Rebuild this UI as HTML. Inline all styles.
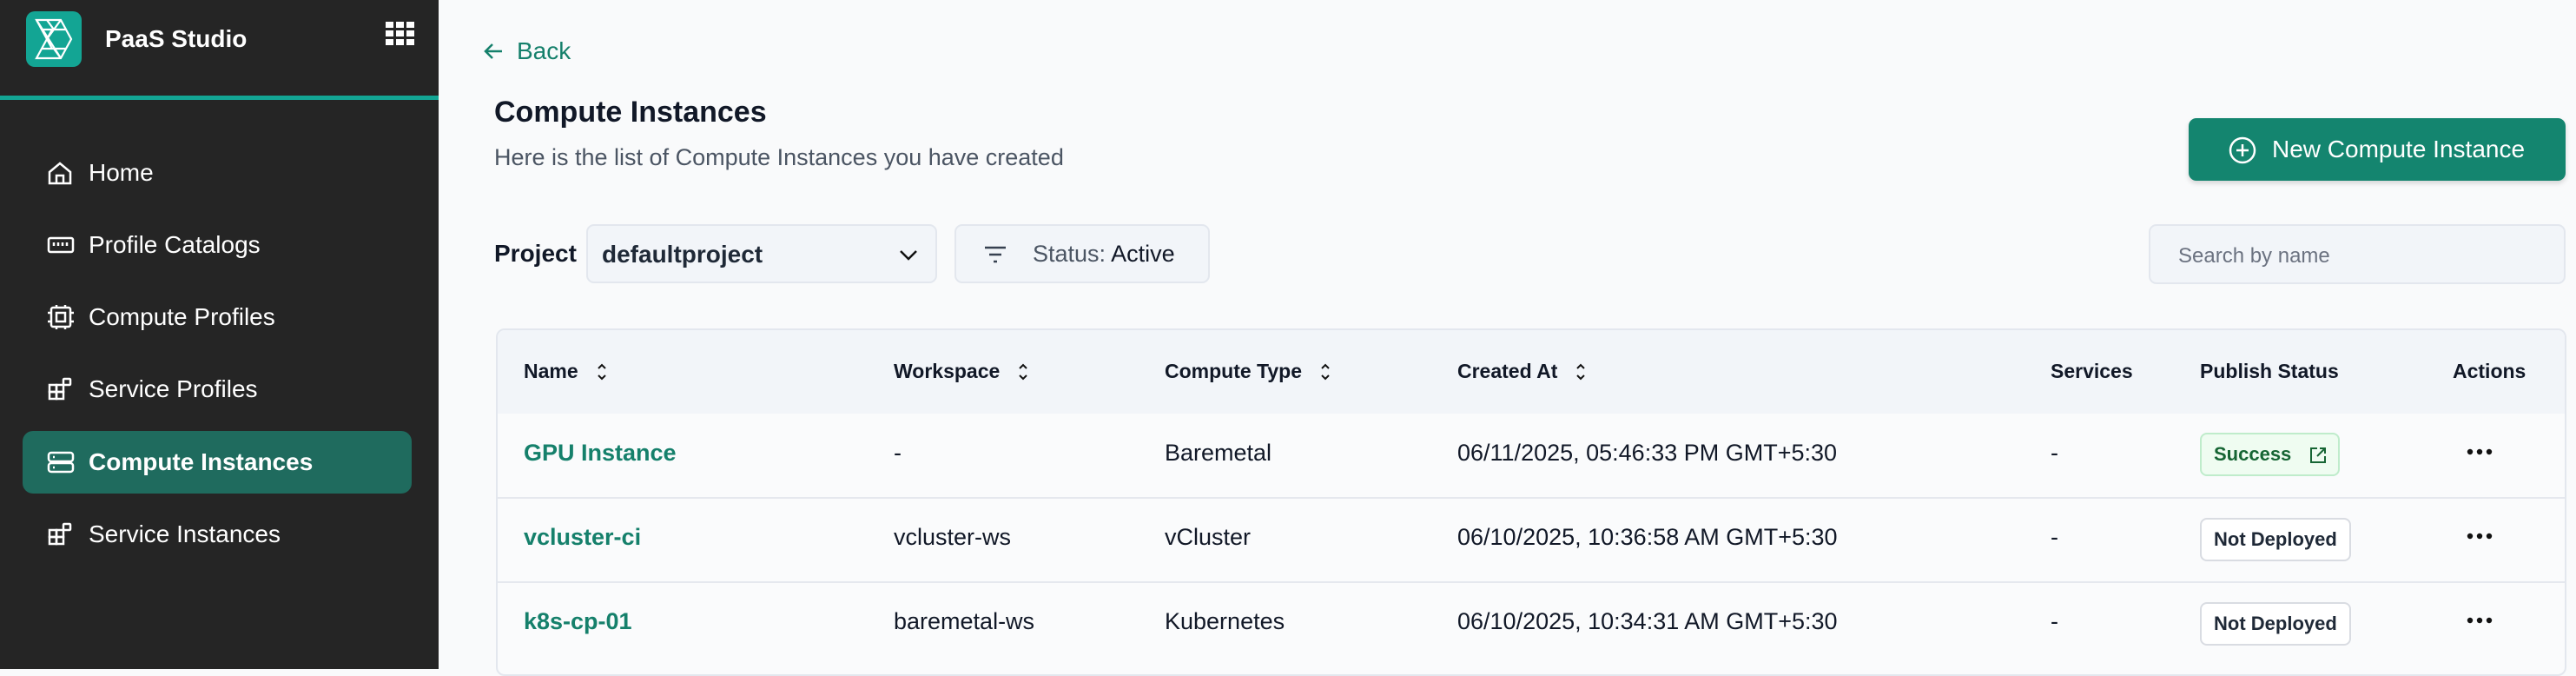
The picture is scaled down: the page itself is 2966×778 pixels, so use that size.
<!DOCTYPE html>
<html><head><meta charset="utf-8"><style>
*{box-sizing:border-box;margin:0;padding:0}
body{width:2966px;height:770px;overflow:hidden;background:#f9fafb;font-family:"Liberation Sans",sans-serif;position:relative;color:#111827}
.sb{position:absolute;left:0;top:0;width:505px;height:770px;background:#252525}
.hdr{position:absolute;left:0;top:0;width:505px;height:115px;border-bottom:5px solid #13a594}
.logo{position:absolute;left:30px;top:13px;width:64px;height:64px;background:#13a594;border-radius:10px}
.brand{position:absolute;left:121px;top:29px;color:#fff;font-weight:bold;font-size:28px}
.nav{position:absolute;left:0;width:505px;height:72px;color:#fff;font-size:28px}
.nav span{position:absolute;left:102px;top:50%;transform:translateY(-50%)}
.nav svg{position:absolute;left:54px;top:50%;transform:translateY(-50%)}
.act{left:26px;width:448px;background:#1f6b5e;border-radius:12px;font-weight:bold}
.act span{left:76px}.act svg{left:28px}
.abs{position:absolute}
.box{position:absolute;background:#f2f5f9;border:2px solid #e3e7ee;border-radius:9px}
.th{position:absolute;top:414px;font-size:23px;font-weight:bold;color:#111827}
.th svg{vertical-align:-4px;margin-left:20px}
.td{position:absolute;font-size:27px;color:#111827}
.lnk{color:#15806b;font-weight:bold}
.badge{position:absolute;border-radius:8px;font-size:22px;font-weight:bold;padding:0 14px;height:50px;line-height:46px}
.dots{position:absolute;left:2840px}
</style></head><body>
<div class="sb">
 <div class="hdr">
  <div class="logo"><svg width="64" height="64" viewBox="0 0 64 64" fill="none" stroke="#fff" stroke-width="2.2"><path d="M12 10h28l12 22-12 22H12l12-22z"/><path d="M12 10l28 44M40 10L24 32M18 21h28M18 43h28M24 10l8 11M32 43l8 11M30 21l-6 11 6 11"/></svg></div>
  <div class="brand">PaaS Studio</div>
  <svg class="abs" style="left:444px;top:25px" width="34" height="28"><g fill="#fff"><rect x="0" y="0" width="9" height="7"/><rect x="12" y="0" width="9" height="7"/><rect x="24" y="0" width="9" height="7"/><rect x="0" y="10" width="9" height="7"/><rect x="12" y="10" width="9" height="7"/><rect x="24" y="10" width="9" height="7"/><rect x="0" y="20" width="9" height="7"/><rect x="12" y="20" width="9" height="7"/><rect x="24" y="20" width="9" height="7"/></g></svg>
 </div>
 <div class="nav" style="top:163px"><svg width="30" height="28" fill="none" stroke="#fff" stroke-width="2.5"><path d="M3 13L15 3l12 10v13H3z"/><path d="M11 26v-9h8v9"/></svg><span>Home</span></div>
 <div class="nav" style="top:246px"><svg width="32" height="22" fill="none" stroke="#fff" stroke-width="2.5"><rect x="2" y="3" width="28" height="16" rx="2"/><path d="M8 8v4M13 8v4M18 8v4M23 8v4"/></svg><span>Profile Catalogs</span></div>
 <div class="nav" style="top:329px"><svg width="32" height="30" fill="none" stroke="#fff" stroke-width="2.5"><rect x="5" y="4" width="22" height="22" rx="2"/><rect x="11" y="10" width="10" height="10"/><path d="M1 10h4M1 20h4M27 10h4M27 20h4M11 1v3M21 1v3M11 26v3M21 26v3"/></svg><span>Compute Profiles</span></div>
 <div class="nav" style="top:412px"><svg width="30" height="30" fill="none" stroke="#fff" stroke-width="2.5"><rect x="3" y="10" width="8" height="8"/><rect x="11" y="10" width="8" height="8"/><rect x="3" y="18" width="8" height="8"/><rect x="11" y="18" width="8" height="8"/><rect x="19" y="3" width="8" height="7" rx="1"/></svg><span>Service Profiles</span></div>
 <div class="nav act" style="top:496px"><svg width="32" height="26" fill="none" stroke="#fff" stroke-width="2.5"><rect x="2" y="2" width="28" height="10" rx="3"/><rect x="2" y="14" width="28" height="10" rx="3"/><path d="M7 7h2M7 19h2"/></svg><span>Compute Instances</span></div>
 <div class="nav" style="top:579px"><svg width="30" height="30" fill="none" stroke="#fff" stroke-width="2.5"><rect x="3" y="10" width="8" height="8"/><rect x="11" y="10" width="8" height="8"/><rect x="3" y="18" width="8" height="8"/><rect x="11" y="18" width="8" height="8"/><rect x="19" y="3" width="8" height="7" rx="1"/></svg><span>Service Instances</span></div>
</div>

<svg class="abs" style="left:556px;top:48px" width="24" height="22" fill="none" stroke="#15806b" stroke-width="2.5"><path d="M22 11H3M11 3l-8 8 8 8"/></svg>
<div class="abs" style="left:595px;top:43px;font-size:28px;color:#15806b">Back</div>
<div class="abs" style="left:569px;top:110px;font-size:34px;font-weight:bold;color:#111827">Compute Instances</div>
<div class="abs" style="left:569px;top:166px;font-size:27px;color:#4b5563">Here is the list of Compute Instances you have created</div>

<div class="abs" style="left:2520px;top:136px;width:434px;height:72px;background:#14856f;border-radius:9px;box-shadow:0 3px 6px rgba(0,0,0,.15);color:#fff;font-size:28px;line-height:72px"><svg class="abs" style="left:46px;top:21px" width="32" height="32" fill="none" stroke="#fff" stroke-width="2.5"><circle cx="16" cy="16" r="14"/><path d="M16 9v14M9 16h14"/></svg><span class="abs" style="left:96px">New Compute Instance</span></div>

<div class="abs" style="left:569px;top:276px;font-size:28px;font-weight:bold">Project</div>
<div class="box" style="left:675px;top:258px;width:404px;height:68px"><span class="abs" style="left:16px;top:17px;font-size:28px;font-weight:bold;color:#1f2937">defaultproject</span><svg class="abs" style="left:358px;top:27px" width="22" height="14" fill="none" stroke="#111" stroke-width="2.5"><path d="M2 2l9 9 9-9"/></svg></div>
<div class="box" style="left:1099px;top:258px;width:294px;height:68px"><svg class="abs" style="left:32px;top:22px" width="26" height="22" fill="none" stroke="#374151" stroke-width="2.5"><path d="M1 3h24M6 11h14M11 19h4"/></svg><span class="abs" style="left:88px;top:17px;font-size:27px;color:#4b5563">Status: <span style="color:#111827">Active</span></span></div>
<div class="box" style="left:2474px;top:258px;width:480px;height:69px"><span class="abs" style="left:32px;top:21px;font-size:24px;color:#6b7280">Search by name</span></div>

<div class="abs" style="left:571px;top:378px;width:2384px;height:400px;border:2px solid #e3e7ee;border-radius:10px;background:#fafbfc;overflow:hidden">
 <div class="abs" style="left:0;top:0;width:100%;height:96px;background:#f2f5f9"></div>
 <div class="abs" style="left:0;top:192px;width:100%;height:2px;background:#e5e8ee"></div>
 <div class="abs" style="left:0;top:289px;width:100%;height:2px;background:#e5e8ee"></div>
</div>
<div class="th" style="left:603px">Name<svg width="14" height="22" fill="none" stroke="#111" stroke-width="2"><path d="M3 7l4-4 4 4M3 15l4 4 4-4"/></svg></div>
<div class="th" style="left:1029px">Workspace<svg width="14" height="22" fill="none" stroke="#111" stroke-width="2"><path d="M3 7l4-4 4 4M3 15l4 4 4-4"/></svg></div>
<div class="th" style="left:1341px">Compute Type<svg width="14" height="22" fill="none" stroke="#111" stroke-width="2"><path d="M3 7l4-4 4 4M3 15l4 4 4-4"/></svg></div>
<div class="th" style="left:1678px">Created At<svg width="14" height="22" fill="none" stroke="#111" stroke-width="2"><path d="M3 7l4-4 4 4M3 15l4 4 4-4"/></svg></div>
<div class="th" style="left:2361px">Services</div>
<div class="th" style="left:2533px">Publish Status</div>
<div class="th" style="left:2824px">Actions</div>

<div class="td lnk" style="left:603px;top:506px">GPU Instance</div>
<div class="td" style="left:1029px;top:506px">-</div>
<div class="td" style="left:1341px;top:506px">Baremetal</div>
<div class="td" style="left:1678px;top:506px">06/11/2025, 05:46:33 PM GMT+5:30</div>
<div class="td" style="left:2361px;top:506px">-</div>
<div class="badge" style="left:2533px;top:498px;width:161px;background:#effcf1;border:2px solid #bfeccb;color:#166534">Success<svg class="abs" style="left:124px;top:14px" width="20" height="20" fill="none" stroke="#166534" stroke-width="2"><path d="M9 2H2v16h16v-7M12 2h6v6M18 2l-9 9"/></svg></div>
<svg class="dots" style="top:516px" width="30" height="8"><g fill="#111"><circle cx="4" cy="4" r="3.2"/><circle cx="15" cy="4" r="3.2"/><circle cx="26" cy="4" r="3.2"/></g></svg>

<div class="td lnk" style="left:603px;top:603px">vcluster-ci</div>
<div class="td" style="left:1029px;top:603px">vcluster-ws</div>
<div class="td" style="left:1341px;top:603px">vCluster</div>
<div class="td" style="left:1678px;top:603px">06/10/2025, 10:36:58 AM GMT+5:30</div>
<div class="td" style="left:2361px;top:603px">-</div>
<div class="badge" style="left:2533px;top:596px;background:#fff;border:2px solid #d9dce2;color:#1f2937">Not Deployed</div>
<svg class="dots" style="top:613px" width="30" height="8"><g fill="#111"><circle cx="4" cy="4" r="3.2"/><circle cx="15" cy="4" r="3.2"/><circle cx="26" cy="4" r="3.2"/></g></svg>

<div class="td lnk" style="left:603px;top:700px">k8s-cp-01</div>
<div class="td" style="left:1029px;top:700px">baremetal-ws</div>
<div class="td" style="left:1341px;top:700px">Kubernetes</div>
<div class="td" style="left:1678px;top:700px">06/10/2025, 10:34:31 AM GMT+5:30</div>
<div class="td" style="left:2361px;top:700px">-</div>
<div class="badge" style="left:2533px;top:693px;background:#fff;border:2px solid #d9dce2;color:#1f2937">Not Deployed</div>
<svg class="dots" style="top:710px" width="30" height="8"><g fill="#111"><circle cx="4" cy="4" r="3.2"/><circle cx="15" cy="4" r="3.2"/><circle cx="26" cy="4" r="3.2"/></g></svg>
</body></html>
